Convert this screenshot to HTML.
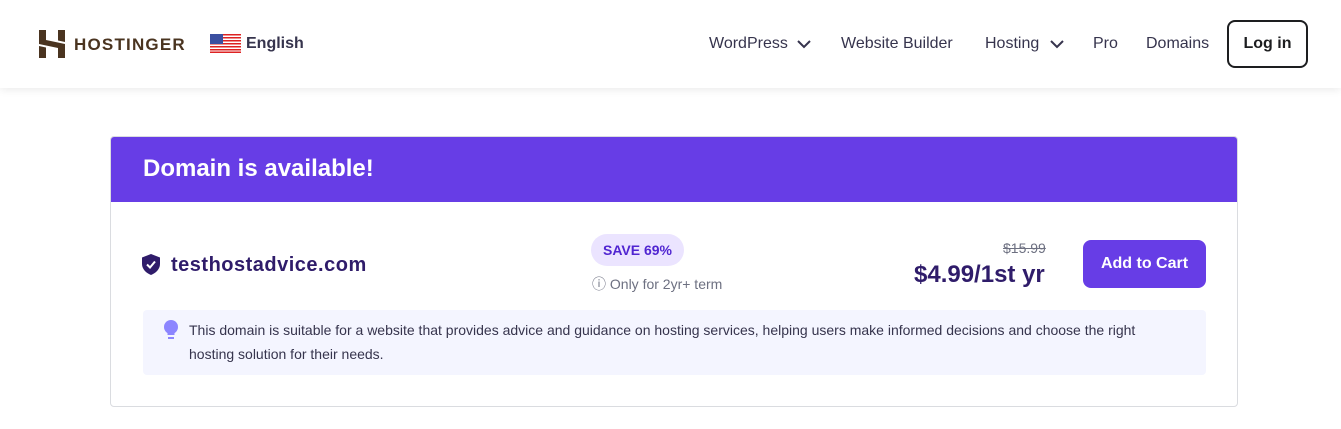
<!DOCTYPE html>
<html><head><style>
*{margin:0;padding:0;box-sizing:border-box}
body{width:1341px;height:429px;background:#fff;font-family:"Liberation Sans",sans-serif;position:relative;overflow:hidden;color:#2f1c6a}
.hdr{position:absolute;left:0;top:0;width:1341px;height:88px;background:#fff;box-shadow:0 2px 8px rgba(0,0,0,.08)}
.a{position:absolute;white-space:nowrap}
.nav{font-size:16px;color:#36344d;top:35px}
.card{position:absolute;left:110px;top:136px;width:1128px;height:271px;border:1px solid #dadce0;border-radius:4px;overflow:hidden}
.top{height:65px;background:#673de6;color:#fff;font-weight:bold;font-size:24px;padding:18px 0 0 32px}
</style></head><body>
<div class="hdr">
<svg class="a" style="left:39px;top:30px" width="26" height="28" viewBox="0 0 26 28"><path d="M0 0h7v10l19 4V28h-7V18L0 14z M0 16l7 1.5V28H0z M19 0h7v12l-7-1.5z" fill="#4a3420"/></svg>
<div class="a" style="left:74px;top:35px;font-size:17px;font-weight:bold;letter-spacing:1.2px;color:#4a3420">HOSTINGER</div>
<svg class="a" style="left:210px;top:34px" width="31" height="19" viewBox="0 0 31 19"><rect width="31" height="19" fill="#fff"/><g fill="#d22"><rect y="0" width="31" height="1.5"/><rect y="3" width="31" height="1.5"/><rect y="6" width="31" height="1.5"/><rect y="9" width="31" height="1.5"/><rect y="12" width="31" height="1.5"/><rect y="15" width="31" height="1.5"/><rect y="17.5" width="31" height="1.5"/></g><rect width="13" height="10" fill="#3b4fa0"/></svg>
<div class="a" style="left:246px;top:35px;font-size:16px;font-weight:bold;color:#36344d">English</div>
<div class="a nav" style="left:709px">WordPress</div>
<svg class="a" style="left:797px;top:40px" width="14" height="9"><path d="M1 1l6 6 6-6" stroke="#36344d" stroke-width="2" fill="none"/></svg>
<div class="a nav" style="left:841px">Website Builder</div>
<div class="a nav" style="left:985px">Hosting</div>
<svg class="a" style="left:1050px;top:40px" width="14" height="9"><path d="M1 1l6 6 6-6" stroke="#36344d" stroke-width="2" fill="none"/></svg>
<div class="a nav" style="left:1093px">Pro</div>
<div class="a nav" style="left:1146px">Domains</div>
<div class="a" style="left:1227px;top:20px;width:81px;height:48px;border:2px solid #1d1e20;border-radius:8px;font-weight:bold;font-size:16px;color:#1d1e20;text-align:center;line-height:44px">Log in</div>
</div>
<div class="card">
<div class="top">Domain is available!</div>
<svg class="a" style="left:31px;top:117px" width="18" height="21" viewBox="0 0 18 21"><path d="M9 0L18 3.5V10c0 5-4 9-9 11C4 19 0 15 0 10V3.5z" fill="#2f1c6a"/><path d="M5 10.5l3 3 5-6" stroke="#fff" stroke-width="2" fill="none"/></svg>
<div class="a" style="left:60px;top:117px;font-size:20px;font-weight:bold;color:#2f1c6a;letter-spacing:0.5px">testhostadvice.com</div>
<div class="a" style="left:480px;top:97px;width:93px;height:32px;border-radius:16px;background:#ebe4ff;color:#5025d1;font-weight:bold;font-size:14px;text-align:center;line-height:32px">SAVE 69%</div>
<div class="a" style="left:481px;top:137px;font-size:14px;color:#6d7081">&#9432; Only for 2yr+ term</div>
<div class="a" style="left:892px;top:103px;font-size:14px;color:#6d7081;text-decoration:line-through">$15.99</div>
<div class="a" style="left:803px;top:124px;font-size:24px;font-weight:bold;color:#2f1c6a">$4.99/1st yr</div>
<div class="a" style="left:972px;top:103px;width:123px;height:48px;background:#673de6;border-radius:8px;color:#fff;font-weight:bold;font-size:16px;text-align:center;line-height:48px">Add to Cart</div>
<div class="a" style="left:32px;top:173px;width:1063px;height:65px;background:#f4f5ff;border-radius:4px"></div>
<svg class="a" style="left:53px;top:183px" width="14" height="21" viewBox="0 0 14 21"><circle cx="7" cy="7" r="7" fill="#8c85ff"/><rect x="3.5" y="10" width="7" height="5" fill="#8c85ff"/><rect x="4" y="17" width="6" height="2" fill="#8c85ff"/></svg>
<div class="a" style="left:78px;top:181px;font-size:14px;color:#36344d;line-height:24px;white-space:normal;width:992px">This domain is suitable for a website that provides advice and guidance on hosting services, helping users make informed decisions and choose the right hosting solution for their needs.</div>
</div>
</body></html>
